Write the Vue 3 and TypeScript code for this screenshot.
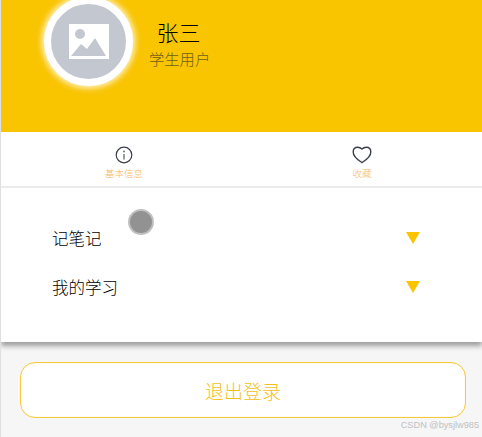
<script setup lang="ts">
const tabs = [
  { id: 'info', label: '基本信息' },
  { id: 'fav', label: '收藏' }
]
const menus = ['记笔记', '我的学习']
</script>

<template>
  <div class="page">
    <div class="header">
      <div class="avatar">
        <svg width="40" height="35" viewBox="0 0 40 35">
          <rect width="40" height="35" fill="#fff" />
          <circle cx="11" cy="10" r="5" fill="#c3c7cf" />
          <path d="M2 32 L12 20 L18 25 L26 14 L37 32 Z" fill="#c3c7cf" />
        </svg>
      </div>
      <div class="user">
        <div class="name">张三</div>
        <div class="role">学生用户</div>
      </div>
    </div>

    <div class="tabs">
      <div v-for="tab in tabs" :key="tab.id" class="tab">
        <svg v-if="tab.id === 'info'" width="18" height="18" viewBox="0 0 18 18" fill="none">
          <circle cx="9" cy="9" r="7.8" stroke="#3a3f4a" stroke-width="1.2" />
          <path d="M9 8 V13.5" stroke="#666" stroke-width="1.3" />
          <circle cx="9" cy="5.5" r="0.9" fill="#666" />
        </svg>
        <svg v-else width="20" height="18" viewBox="0 0 20 18" fill="none">
          <path d="M10 16.6 C8.5 15.6 1.2 11.5 1.2 6 C1.2 3 3 1.2 5.7 1.2 C7.5 1.2 9 2 10 3 C11 2 12.5 1.2 14.3 1.2 C17 1.2 18.8 3 18.8 6 C18.8 11.5 11.5 15.6 10 16.6 Z" stroke="#3a3f4a" stroke-width="1.4" />
        </svg>
        <span class="tab-label">{{ tab.label }}</span>
      </div>
    </div>

    <div class="card">
      <div v-for="item in menus" :key="item" class="row">
        <span>{{ item }}</span>
        <i class="arrow"></i>
      </div>
    </div>

    <button class="logout">退出登录</button>

    <div class="dot"></div>
    <div class="mark">CSDN @bysjlw985</div>
  </div>
</template>

<style>
html,
body {
  margin: 0;
  background: #f6f6f7;
}
</style>

<style scoped>
.page {
  position: relative;
  width: 482px;
  height: 437px;
  overflow: hidden;
  box-sizing: border-box;
  border-left: 1px solid #e0e0e4;
  background: #f6f6f7;
  font-family: "Noto Sans CJK SC", "Liberation Sans", sans-serif;
  font-weight: 300;
}

.header {
  display: flex;
  align-items: flex-start;
  height: 132px;
  padding-left: 43px;
  box-sizing: border-box;
  background: #f9c400;
}

.avatar {
  display: flex;
  align-items: center;
  justify-content: center;
  flex-shrink: 0;
  width: 75px;
  height: 75px;
  margin-top: -3px;
  border: 7px solid #fff;
  border-radius: 50%;
  background: #c3c7cf;
  box-shadow: 0 0 6px 2px rgba(255, 255, 255, 0.85);
}

.user {
  display: flex;
  flex-direction: column;
  align-items: center;
  margin: 16px 0 0 16px;
}

.name {
  margin-right: 2px;
  font-size: 22px;
  line-height: 30px;
  color: #000;
}

.role {
  font-size: 15.3px;
  line-height: 20px;
  margin-top: 2px;
  color: #6e6018;
}

.tabs {
  display: grid;
  grid-template-columns: 238px 238px;
  height: 54px;
  padding-left: 4px;
  background: #fff;
  border-bottom: 2px solid #eeeeee;
}

.tab {
  display: flex;
  flex-direction: column;
  align-items: center;
  padding-top: 14px;
}

.tab-label {
  margin-top: 3px;
  font-size: 9.5px;
  line-height: 12px;
  color: #f7b95c;
}

.card {
  display: flex;
  flex-direction: column;
  height: 154px;
  padding: 25px 62px 0 51px;
  box-sizing: border-box;
  background: #fff;
  box-shadow: 0 4px 5px rgba(70, 70, 70, 0.5);
}

.row {
  display: flex;
  align-items: center;
  justify-content: space-between;
  height: 49px;
  font-size: 16.5px;
  color: #000;
}

.arrow {
  width: 0;
  height: 0;
  border-left: 7px solid transparent;
  border-right: 7px solid transparent;
  border-top: 12px solid #fcc400;
}

.logout {
  display: block;
  width: 446px;
  height: 56px;
  margin: 20px 0 0 19px;
  padding: 0;
  border: 1px solid #f6c93a;
  border-radius: 15px;
  background: #fff;
  box-shadow: inset 0 0 2px #fdf0c0;
  color: #f4bf1c;
  font-family: inherit;
  font-weight: 300;
  font-size: 19px;
}

.dot {
  position: absolute;
  left: 127px;
  top: 209px;
  width: 22px;
  height: 22px;
  border: 2px solid #c0c0c0;
  border-radius: 50%;
  background: #929292;
}

.mark {
  position: absolute;
  right: 3px;
  bottom: 6px;
  font-family: "Liberation Sans", sans-serif;
  font-size: 9.2px;
  line-height: 12px;
  color: #c0c0c0;
}
</style>
